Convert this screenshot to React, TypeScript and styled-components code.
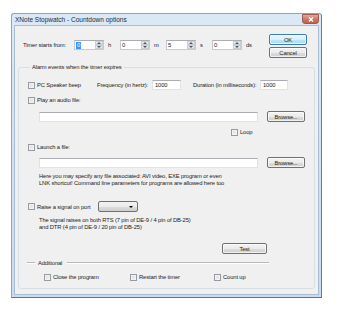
import styled, { createGlobalStyle } from "styled-components";

const GlobalStyle = createGlobalStyle`
  * { box-sizing: border-box; }
  html, body { margin: 0; padding: 0; background: #ffffff; }
  body {
    font-family: "Liberation Sans", Arial, sans-serif;
    font-size: 5.8px;
    letter-spacing: -0.12px;
    color: #1b1b1b;
  }
`;

const Page = styled.div`
  width: 340px;
  height: 315px;
  padding: 13px 0 0 11px;
`;

const Window = styled.div`
  width: 311px;
  height: 285px;
  display: flex;
  flex-direction: column;
  padding: 0 2px 2px;
  background: linear-gradient(#dbe8f5, #c9dbee);
  border: 1px solid #8ea5bd;
  border-right-color: #3c8db2;
  border-bottom-color: #2f87ae;
  border-radius: 3px 3px 0 0;
`;

const TitleBar = styled.div`
  height: 11px;
  display: flex;
  align-items: flex-start;
  justify-content: space-between;
`;

const Title = styled.span`
  font-size: 6.5px;
  letter-spacing: 0;
  line-height: 11px;
  padding-left: 1px;
  color: #1f2a36;
`;

const CloseButton = styled.div`
  width: 17px;
  height: 10px;
  border: 1px solid #9a5a50;
  border-radius: 0 0 3px 3px;
  background: linear-gradient(#e2aa9c, #cd7665 55%, #c2604d);
  display: flex;
  align-items: center;
  justify-content: center;
`;

const Body = styled.div`
  flex: 1;
  display: flex;
  flex-direction: column;
  background: #f0f0f0;
  border: 1px solid #a9bdd3;
  padding: 8px 3px 5px 3px;
`;

const TopRow = styled.div`
  height: 24px;
  display: flex;
  align-items: flex-start;
`;

const TimerRow = styled.div`
  margin-top: 6px;
  height: 10px;
  padding-left: 5px;
  display: flex;
  align-items: center;
`;

const FieldLabel = styled.span<{ $w: number }>`
  width: ${({ $w }) => $w}px;
  flex: none;
  white-space: nowrap;
`;

const SpinBox = styled.div`
  width: 30px;
  height: 10px;
  display: flex;
  background: #ffffff;
  border: 1px solid #c5cbd2;
  border-top-color: #abadb3;
`;

const SpinValue = styled.div`
  flex: 1;
  padding-left: 1px;
  display: flex;
  align-items: center;
`;

const Selected = styled.span`
  background: #3399ff;
  color: #ffffff;
  padding: 0 1px;
  line-height: 7px;
`;

const SpinButtons = styled.div`
  width: 8px;
  display: flex;
  flex-direction: column;
`;

const SpinHalf = styled.div`
  flex: 1;
  display: flex;
  align-items: center;
  justify-content: center;
  background: linear-gradient(#f4f4f4, #dcdcdc);
  border: 1px solid #c9ced4;
`;

const Unit = styled.span`
  width: 16px;
  flex: none;
  padding-left: 4px;
`;

const ButtonColumn = styled.div`
  margin-left: auto;
  margin-right: 8px;
  display: flex;
  flex-direction: column;
  gap: 2px;
`;

const Button = styled.div<{ $w: number; $default?: boolean }>`
  width: ${({ $w }) => $w}px;
  height: 11px;
  flex: none;
  display: flex;
  align-items: center;
  justify-content: center;
  border-radius: 2px;
  border: 1px solid ${({ $default }) => ($default ? "#3c7fb1" : "#707070")};
  background: ${({ $default }) =>
    $default
      ? "linear-gradient(#eaf6fd, #d9f0fc 50%, #bee6fd 51%, #a7d9f5)"
      : "linear-gradient(#f2f2f2, #ebebeb 50%, #dddddd 51%, #cfcfcf)"};
  box-shadow: inset 0 0 0 1px rgba(255, 255, 255, 0.7);
`;

const Group = styled.fieldset`
  flex: 1;
  margin: 5px 0 0;
  padding: 0 0 0 9px;
  min-inline-size: 0;
  border: 1px solid #d5dfe5;
  border-radius: 3px;
`;

const Legend = styled.legend`
  margin-left: 2px;
  padding: 0 2px;
  line-height: 8px;
`;

const Row = styled.div<{ $h: number; $mt: number; $pl?: number }>`
  height: ${({ $h }) => $h}px;
  margin-top: ${({ $mt }) => $mt}px;
  padding-left: ${({ $pl }) => $pl ?? 0}px;
  display: flex;
  align-items: center;
`;

const CheckItem = styled.label<{ $w?: number }>`
  ${({ $w }) => ($w ? `width: ${$w}px; flex: none;` : "")}
  display: flex;
  align-items: center;
  gap: 2px;
  white-space: nowrap;
`;

const Box = styled.span`
  width: 7px;
  height: 7px;
  flex: none;
  border: 1px solid #979a9e;
  background: linear-gradient(135deg, #d6d9dd, #f6f6f7);
  box-shadow: inset 0 0 0 1px #f1f2f3;
`;

const TextInput = styled.div<{ $w: number }>`
  width: ${({ $w }) => $w}px;
  height: 10px;
  flex: none;
  background: #ffffff;
  border: 1px solid #dfe3e8;
  border-top-color: #abadb3;
  padding-left: 2px;
  display: flex;
  align-items: center;
`;

const HelpText = styled.div<{ $mt: number }>`
  margin-top: ${({ $mt }) => $mt}px;
  padding-left: 11px;
  line-height: 7px;
`;

const Select = styled.div`
  width: 40px;
  height: 11px;
  border: 1px solid #707070;
  border-radius: 2px;
  background: linear-gradient(#f2f2f2, #ebebeb 50%, #dddddd 51%, #cfcfcf);
  display: flex;
  align-items: center;
  justify-content: flex-end;
  padding-right: 4px;
`;

const Separator = styled.div`
  height: 8px;
  width: 242px;
  margin: 5px 0 0 -1px;
  display: flex;
  align-items: center;
  gap: 3px;
`;

const Line = styled.span<{ $w?: number }>`
  ${({ $w }) => ($w ? `width: ${$w}px; flex: none;` : "flex: 1;")}
  height: 2px;
  border-top: 1px solid #b9b9b9;
  border-bottom: 1px solid #ffffff;
`;

const Arrow = ({ up }: { up?: boolean }) => (
  <svg width="4" height="2" viewBox="0 0 4 2">
    <path d={up ? "M0 2 L2 0 L4 2 Z" : "M0 0 L4 0 L2 2 Z"} fill="#4d5b6b" />
  </svg>
);

const Spin = ({ value, selected }: { value: string; selected?: boolean }) => (
  <SpinBox>
    <SpinValue>{selected ? <Selected>{value}</Selected> : value}</SpinValue>
    <SpinButtons>
      <SpinHalf>
        <Arrow up />
      </SpinHalf>
      <SpinHalf>
        <Arrow />
      </SpinHalf>
    </SpinButtons>
  </SpinBox>
);

const Check = ({ label, w }: { label: string; w?: number }) => (
  <CheckItem $w={w}>
    <Box />
    {label}
  </CheckItem>
);

export default function App() {
  return (
    <Page>
      <GlobalStyle />
      <Window>
        <TitleBar>
          <Title>XNote Stopwatch - Countdown options</Title>
          <CloseButton>
            <svg width="6" height="5" viewBox="0 0 6 5">
              <path d="M1 0.5 L5 4.5 M5 0.5 L1 4.5" stroke="#ffffff" strokeWidth="1.3" />
            </svg>
          </CloseButton>
        </TitleBar>
        <Body>
          <TopRow>
            <TimerRow>
              <FieldLabel $w={51}>Timer starts from:</FieldLabel>
              <Spin value="0" selected />
              <Unit>h</Unit>
              <Spin value="0" />
              <Unit>m</Unit>
              <Spin value="5" />
              <Unit>s</Unit>
              <Spin value="0" />
              <Unit>ds</Unit>
            </TimerRow>
            <ButtonColumn>
              <Button $w={38} $default>
                OK
              </Button>
              <Button $w={38}>Cancel</Button>
            </ButtonColumn>
          </TopRow>

          <Group>
            <Legend>Alarm events when the timer expires</Legend>
            <Row $h={10} $mt={9}>
              <Check label="PC Speaker beep" w={69} />
              <FieldLabel $w={55}>Frequency (in hertz):</FieldLabel>
              <TextInput $w={29}>1000</TextInput>
              <FieldLabel $w={67} style={{ marginLeft: 12 }}>
                Duration (in milliseconds):
              </FieldLabel>
              <TextInput $w={28}>1000</TextInput>
            </Row>
            <Row $h={10} $mt={5}>
              <Check label="Play an audio file:" />
            </Row>
            <Row $h={11} $mt={6} $pl={11}>
              <TextInput $w={219} />
              <Button $w={38} style={{ marginLeft: 9 }}>
                Browse...
              </Button>
            </Row>
            <Row $h={8} $mt={6} $pl={203}>
              <Check label="Loop" />
            </Row>
            <Row $h={8} $mt={7}>
              <Check label="Launch a file:" />
            </Row>
            <Row $h={11} $mt={6} $pl={11}>
              <TextInput $w={219} />
              <Button $w={38} style={{ marginLeft: 9 }}>
                Browse...
              </Button>
            </Row>
            <HelpText $mt={5}>
              Here you may specify any file associated: AVI video, EXE program or even
              <br />
              LNK shortcut! Command line parameters for programs are allowed here too
            </HelpText>
            <Row $h={11} $mt={14}>
              <Check label="Raise a signal on port" w={70} />
              <Select>
                <svg width="4" height="2" viewBox="0 0 4 2">
                  <path d="M0 0 L4 0 L2 2 Z" fill="#000000" />
                </svg>
              </Select>
            </Row>
            <HelpText $mt={5}>
              The signal raises on both RTS (7 pin of DE-9 / 4 pin of DB-25)
              <br />
              and DTR (4 pin of DE-9 / 20 pin of DB-25)
            </HelpText>
            <Row $h={11} $mt={12} $pl={194}>
              <Button $w={45}>Test</Button>
            </Row>
            <Separator>
              <Line $w={8} />
              <span>Additional</span>
              <Line style={{ marginLeft: 2 }} />
            </Separator>
            <Row $h={8} $mt={6} $pl={16}>
              <Check label="Close the program" w={86} />
              <Check label="Restart the timer" w={84} />
              <Check label="Count up" />
            </Row>
          </Group>
        </Body>
      </Window>
    </Page>
  );
}
